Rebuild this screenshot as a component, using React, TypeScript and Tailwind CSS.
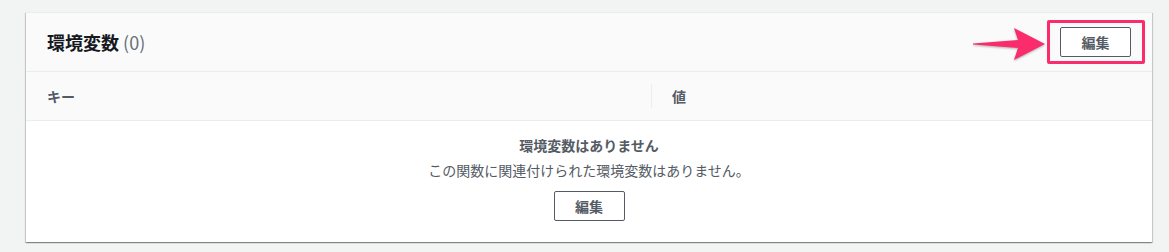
import React from "react";

const font = { fontFamily: '"Noto Sans CJK JP", "Noto Sans", sans-serif' };

function EditButton() {
  return (
    <button className="h-[30px] w-[71px] rounded-[2px] border border-[#545b64] bg-white text-[14px] font-bold leading-[20px] text-[#545b64]">
      編集
    </button>
  );
}

export default function App() {
  return (
    <div style={font} className="h-[252px] w-full bg-[#f2f3f3] px-[26px] pt-[12px]">
      <div className="relative w-[1126px] border-t border-[#eaeded] bg-white shadow-[0_1px_1px_0_rgba(0,28,36,0.3),1px_1px_1px_0_rgba(0,28,36,0.15),-1px_1px_1px_0_rgba(0,28,36,0.15)]">
        {/* Header */}
        <div className="flex h-[59px] items-center justify-between border-b border-[#eaeded] bg-[#fafafa] pl-[21px] pr-[21px]">
          <h2 className="text-[18px] font-bold leading-[24px] text-[#16191f]">
            環境変数 <span className="font-normal text-[#687078]">(0)</span>
          </h2>
          <EditButton />
        </div>

        {/* Column headers */}
        <div className="flex h-[49px] items-center border-b border-[#eaeded] bg-[#fafafa] text-[14px] font-bold text-[#545b64]">
          <div className="w-[625px] pl-[21px]">キー</div>
          <div className="h-[24px] w-px bg-[#eaeded]" />
          <div className="pl-[20px]">値</div>
        </div>

        {/* Empty state */}
        <div className="flex flex-col items-center pb-[21px] pt-[13px] text-[14px] text-[#545b64]">
          <p className="font-bold leading-[22px]">環境変数はありません</p>
          <p className="mt-[3px] leading-[22px]">この関数に関連付けられた環境変数はありません。</p>
          <div className="mt-[10px]">
            <EditButton />
          </div>
        </div>

        {/* Annotation: highlight box */}
        <div className="pointer-events-none absolute left-[1021px] top-[7px] h-[44px] w-[98px] rounded-[2px] border-[3px] border-[#fb2c6b]" />

        {/* Annotation: arrow */}
        <svg
          className="pointer-events-none absolute left-[944px] top-[14px] drop-shadow-[0_1px_1px_rgba(0,0,0,0.3)]"
          width="78"
          height="34"
          viewBox="0 0 78 34"
        >
          <path d="M3 16.5 L48 13 L44 1 L75 17 L44 33 L48 21 L3 17.5 Z" fill="#fb2c6b" />
        </svg>
      </div>
    </div>
  );
}
